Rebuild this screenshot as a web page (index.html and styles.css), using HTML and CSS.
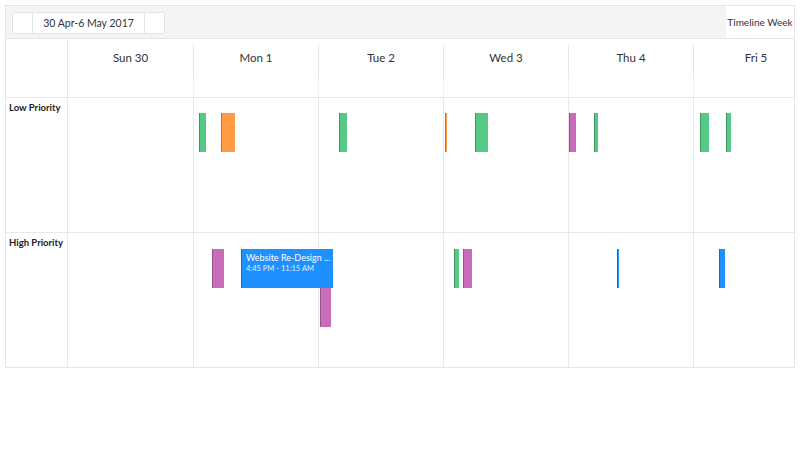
FILE: index.html
```html
<!DOCTYPE html>
<html>
<head>
<meta charset="utf-8">
<link rel="stylesheet" href="styles.css">
</head>
<body>
<div class="scheduler">
  <div class="toolbar">
    <div class="nav-group">
      <div class="nav-btn"></div>
      <div class="nav-date">30 Apr-6 May 2017</div>
      <div class="nav-btn"></div>
    </div>
    <div class="view-btn">Timeline Week</div>
  </div>
  <div class="body">
    <div class="res-col">
      <div class="res-head"></div>
      <div class="res-cell">Low Priority</div>
      <div class="res-cell last">High Priority</div>
    </div>
    <div class="content">
      <div class="days">
        <div class="day"><div class="day-name">Sun 30</div><div class="day-sub"></div></div>
        <div class="day"><div class="day-name">Mon 1</div><div class="day-sub"></div></div>
        <div class="day"><div class="day-name">Tue 2</div><div class="day-sub"></div></div>
        <div class="day"><div class="day-name">Wed 3</div><div class="day-sub"></div></div>
        <div class="day"><div class="day-name">Thu 4</div><div class="day-sub"></div></div>
        <div class="day"><div class="day-name">Fri 5</div><div class="day-sub"></div></div>
      </div>
      <div class="row">
        <div class="cell"></div><div class="cell"></div><div class="cell"></div><div class="cell"></div><div class="cell"></div><div class="cell"></div>
        <div class="ev green" style="left:131px;width:7px;top:15px"></div>
        <div class="ev orange" style="left:153px;width:14px;top:15px"></div>
        <div class="ev green" style="left:271px;width:8px;top:15px"></div>
        <div class="ev orange" style="left:377px;width:2px;top:15px"></div>
        <div class="ev green" style="left:407px;width:13px;top:15px"></div>
        <div class="ev magenta" style="left:501px;width:7px;top:15px"></div>
        <div class="ev green" style="left:526px;width:4px;top:15px"></div>
        <div class="ev green" style="left:632px;width:9px;top:15px"></div>
        <div class="ev green" style="left:658px;width:5px;top:15px"></div>
      </div>
      <div class="row last">
        <div class="cell"></div><div class="cell"></div><div class="cell"></div><div class="cell"></div><div class="cell"></div><div class="cell"></div>
        <div class="ev magenta" style="left:144px;width:12px;top:16px"></div>
        <div class="ev blue wide" style="left:173px;width:92px;top:16px">
          <div class="ev-title">Website Re-Design ...</div>
          <div class="ev-time">4:45 PM - 11:15 AM</div>
        </div>
        <div class="ev magenta" style="left:252px;width:11px;top:55px"></div>
        <div class="ev green" style="left:386px;width:5px;top:16px"></div>
        <div class="ev magenta" style="left:395px;width:9px;top:16px"></div>
        <div class="ev blue" style="left:549px;width:2px;top:16px"></div>
        <div class="ev blue" style="left:651px;width:6px;top:16px"></div>
      </div>
    </div>
  </div>
</div>
</body>
</html>
```
FILE: styles.css
```css
* { box-sizing: border-box; }
body {
  margin: 0;
  padding: 5px;
  background: #fff;
  font-family: Lato, "Noto Sans", sans-serif;
  color: #333;
}
.scheduler {
  width: 790px;
  border: 1px solid #e6e6e6;
  overflow: hidden;
}
.toolbar {
  height: 33px;
  background: #f4f4f4;
  display: flex;
  align-items: stretch;
  justify-content: space-between;
  border-bottom: 1px solid #e6e6e6;
}
.nav-group {
  margin: 6px 0 0 6px;
  height: 22px;
  display: flex;
  background: #fff;
  border: 1px solid #e3e3e3;
  border-radius: 2px;
}
.nav-btn { width: 19px; }
.nav-date {
  width: 113px;
  border-left: 1px solid #e3e3e3;
  border-right: 1px solid #e3e3e3;
  font-size: 10.5px;
  line-height: 20px;
  text-align: center;
  color: #333;
}
.view-btn {
  width: 68px;
  background: #fff;
  font-size: 10px;
  line-height: 33px;
  text-align: center;
  color: #333;
}
.body {
  display: flex;
}
.res-col {
  width: 62px;
  flex: none;
  border-right: 1px solid #e8e8e8;
}
.res-head {
  height: 59px;
  border-bottom: 1px solid #e8e8e8;
}
.res-cell {
  height: 135px;
  padding: 4px 0 0 3px;
  font-size: 9.5px;
  font-weight: 700;
  color: #222;
  border-bottom: 1px solid #e8e8e8;
}
.res-cell.last { height: 134px; border-bottom: none; }
.content {
  flex: none;
  width: 750px;
}
.days {
  display: flex;
  height: 59px;
  border-bottom: 1px solid #e8e8e8;
}
.day {
  width: 125px;
  flex: none;
  display: flex;
  flex-direction: column;
}
.day-name {
  height: 33px;
  padding-top: 6px;
  font-size: 11.5px;
  text-align: center;
  border-left: 1px solid #e6e6e6;
  margin-top: 6px;
}
.day:first-child .day-name,
.day:first-child .day-sub { border-left: none; }
.day-sub {
  flex: 1;
  border-left: 1px solid #f2f2f2;
}
.row {
  position: relative;
  display: flex;
  height: 135px;
  border-bottom: 1px solid #e8e8e8;
}
.row.last { height: 134px; border-bottom: none; }
.cell {
  width: 125px;
  flex: none;
  border-left: 1px solid #e8e8e8;
}
.cell:first-child { border-left: none; }
.ev {
  position: absolute;
  height: 39px;
  border-left: 1px solid rgba(0, 0, 0, 0.25);
}
.green { background: #57c987; }
.orange { background: #ff9a45; }
.magenta { background: #c96cb9; }
.blue { background: #1e90ff; }
.wide {
  padding: 3px 0 0 4px;
  color: #fff;
  white-space: nowrap;
}
.ev-title { font-size: 9px; line-height: 12px; }
.ev-time { font-size: 7.5px; line-height: 10px; opacity: 0.85; }
```
